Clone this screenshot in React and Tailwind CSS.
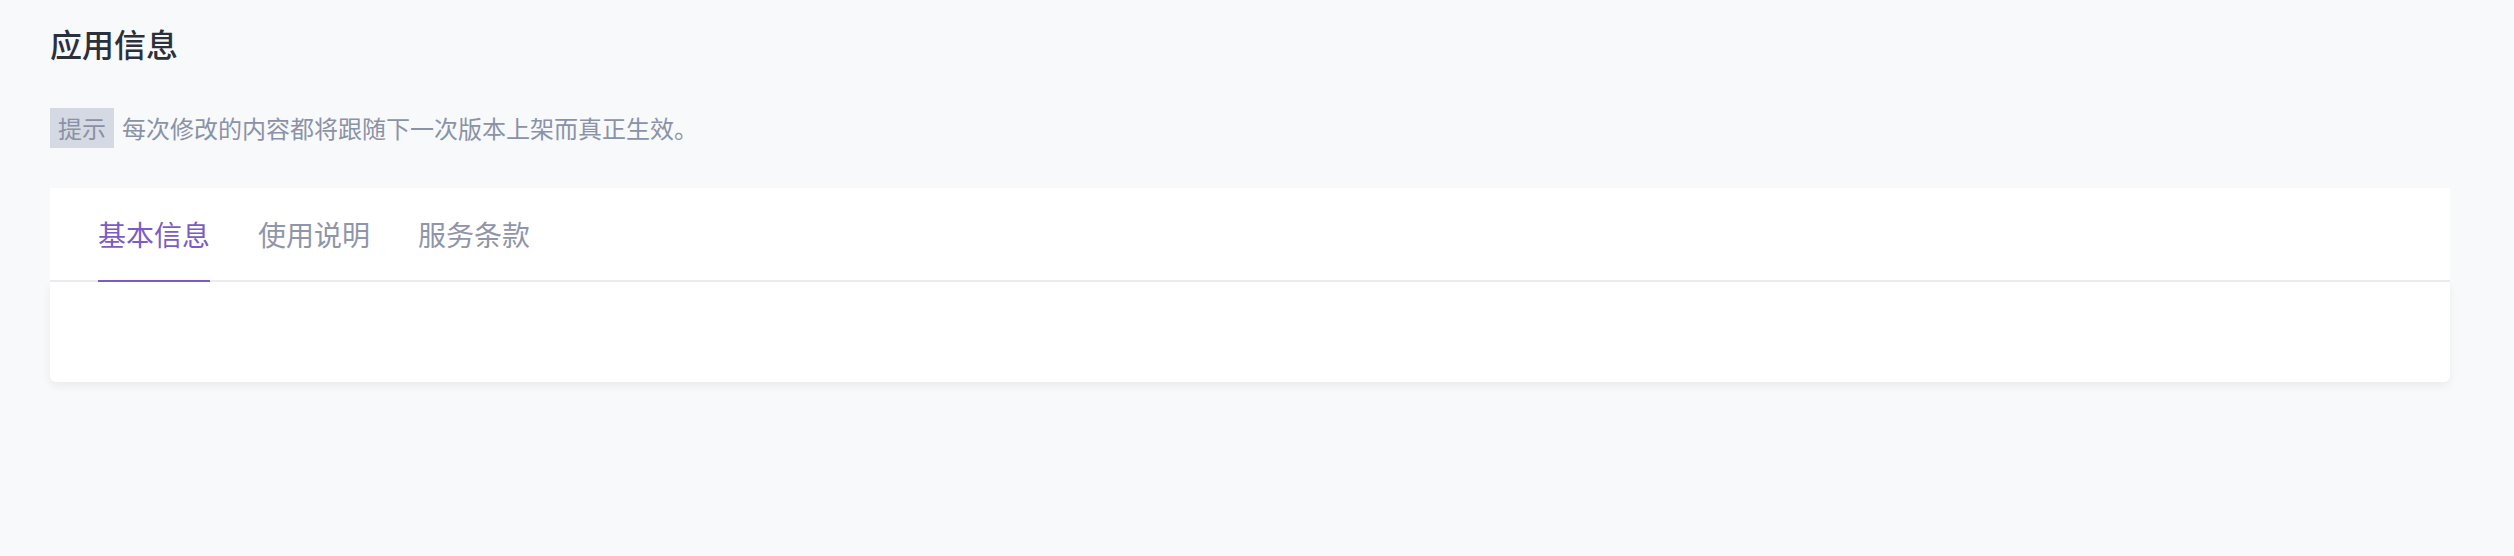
export default function App() {
  const font = { fontFamily: '"Noto Sans CJK SC", "Noto Sans", sans-serif' };
  return (
    <div className="min-h-[556px] w-full bg-[#f8f9fb] pl-[50px] pr-[64px]" style={font}>
      <div className="pt-[19px] text-[32px] leading-[48px] font-medium text-[#2b303b]">应用信息</div>
      <div className="mt-[41px] flex items-center h-[40px]">
        <span className="h-[40px] px-[8px] bg-[#d5d9e3] text-[#8a91a6] text-[24px] leading-[40px]">提示</span>
        <span className="ml-[8px] text-[#8a92a8] text-[24px] leading-[40px]">每次修改的内容都将跟随下一次版本上架而真正生效。</span>
      </div>
      <div className="mt-[40px]">
        <div className="bg-white h-[94px] border-b-2 border-[#ececf1] flex pl-[48px] gap-[48px]">
          <div className="h-[94px] -mb-[2px] flex items-center border-b-2 border-[#7c5cc4] text-[#7c5cc4] text-[28px]">基本信息</div>
          <div className="h-[92px] flex items-center text-[#8f95aa] text-[28px]">使用说明</div>
          <div className="h-[92px] flex items-center text-[#8f95aa] text-[28px]">服务条款</div>
        </div>
        <div className="bg-white h-[100px] rounded-b-[6px] shadow-[0_4px_10px_rgba(0,0,0,0.06)]"></div>
      </div>
    </div>
  );
}
